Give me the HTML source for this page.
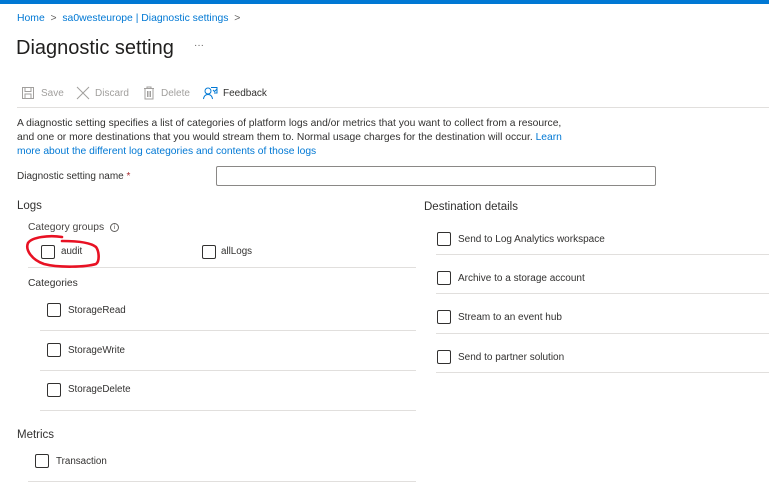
<!DOCTYPE html>
<html><head><meta charset="utf-8"><style>
*{margin:0;padding:0;box-sizing:border-box}
body{width:769px;height:486px;overflow:hidden;background:#fff;font-family:"Liberation Sans",sans-serif;color:#323130;position:relative;font-size:9.8px}
.a{position:absolute;white-space:nowrap;line-height:1}
.cb{position:absolute;width:14px;height:14px;border:1px solid #323130;border-radius:2px}
.ln{position:absolute;height:1px;background:#e1dfdd}
.blue{color:#0078d4}
.h{font-size:11px;color:#323130}
</style></head><body>
<div style="position:absolute;left:0;top:0;width:769px;height:4px;background:#0078d4"></div>
<div class="a blue" style="left:17px;top:14px;font-size:10.4px">Home <span style="color:#605e5c">&nbsp;&gt;&nbsp;</span> sa0westeurope | Diagnostic settings <span style="color:#605e5c">&nbsp;&gt;</span></div>
<div class="a" style="left:16px;top:38px;font-size:20px;color:#201f1e">Diagnostic setting</div>
<div class="a" style="left:194px;top:41px;font-size:10px;color:#605e5c">···</div>

<svg style="position:absolute;left:21px;top:86px" width="14" height="14" viewBox="0 0 14 14" fill="none" stroke="#a19f9d" stroke-width="1"><rect x="1.5" y="1.5" width="11" height="11"/><rect x="4" y="1.5" width="6" height="4"/><rect x="4" y="8" width="6" height="4.5"/></svg>
<div class="a" style="left:41px;top:89px;font-size:10px;color:#a19f9d">Save</div>
<svg style="position:absolute;left:76px;top:86px" width="14" height="14" viewBox="0 0 14 14" stroke="#a19f9d" stroke-width="1"><path d="M1 1L13 13M13 1L1 13"/></svg>
<div class="a" style="left:95px;top:89px;font-size:10px;color:#a19f9d">Discard</div>
<svg style="position:absolute;left:143px;top:86px" width="12" height="14" viewBox="0 0 12 14" fill="none" stroke="#a19f9d" stroke-width="1"><path d="M1 2.5H11M4 2.5V1H8V2.5M2 2.5V13H10V2.5M4.5 5V11M6 5V11M7.5 5V11"/></svg>
<div class="a" style="left:161px;top:89px;font-size:10px;color:#a19f9d">Delete</div>
<svg style="position:absolute;left:203px;top:86px" width="15" height="14" viewBox="0 0 15 14" fill="none" stroke="#0078d4" stroke-width="1"><circle cx="5" cy="5" r="3"/><path d="M0.5 13C1 9.5 3 8.5 5 8.5S9 9.5 9.5 13M8 1.5H14V7H11M10 4L11.5 5.5L14 3"/></svg>
<div class="a" style="left:223px;top:89px;font-size:10px;color:#323130">Feedback</div>
<div class="ln" style="left:17px;top:107px;width:752px"></div>

<div class="a" style="left:17px;top:119px;font-size:10.3px">A diagnostic setting specifies a list of categories of platform logs and/or metrics that you want to collect from a resource,</div>
<div class="a" style="left:17px;top:133px;font-size:10.3px">and one or more destinations that you would stream them to. Normal usage charges for the destination will occur. <span class="blue">Learn</span></div>
<div class="a blue" style="left:17px;top:147px;font-size:10.3px">more about the different log categories and contents of those logs</div>

<div class="a" style="left:17px;top:172px;font-size:10px">Diagnostic setting name <span style="color:#a4262c">*</span></div>
<div style="position:absolute;left:216px;top:166px;width:440px;height:20px;border:1px solid #8a8886;border-radius:2px"></div>

<div class="a h" style="left:17px;top:201px;font-size:11.5px">Logs</div>
<div class="a" style="left:28px;top:223px;font-size:10.3px;color:#484644">Category groups <span style="display:inline-block;width:9px;height:9px;border:1px solid #605e5c;border-radius:50%;font-size:6px;text-align:center;line-height:8px;vertical-align:middle;margin-left:3px">i</span></div>
<div class="cb" style="left:41px;top:245px"></div><div class="a" style="left:61px;top:247px">audit</div>
<div class="cb" style="left:202px;top:245px"></div><div class="a" style="left:221px;top:247px">allLogs</div>
<div class="ln" style="left:28px;top:267px;width:388px"></div>
<svg style="position:absolute;left:24px;top:233px" width="80" height="40" viewBox="0 0 80 40" fill="none" stroke="#e81123" stroke-width="2.6" stroke-linecap="round"><path d="M38 4C25 2 8 4 4 10C1 17 8 27 20 31C35 35 62 34 72 31C76 28 75 18 72 14C66 9 52 8 38 8"/></svg>

<div class="a" style="left:28px;top:279px;font-size:10.3px">Categories</div>
<div class="cb" style="left:47px;top:303px"></div><div class="a" style="left:68px;top:306px">StorageRead</div>
<div class="ln" style="left:40px;top:330px;width:376px"></div>
<div class="cb" style="left:47px;top:343px"></div><div class="a" style="left:68px;top:346px">StorageWrite</div>
<div class="ln" style="left:40px;top:370px;width:376px"></div>
<div class="cb" style="left:47px;top:383px"></div><div class="a" style="left:68px;top:385px">StorageDelete</div>
<div class="ln" style="left:40px;top:410px;width:376px"></div>

<div class="a h" style="left:17px;top:430px;font-size:11.5px">Metrics</div>
<div class="cb" style="left:35px;top:454px"></div><div class="a" style="left:56px;top:457px">Transaction</div>
<div class="ln" style="left:28px;top:481px;width:388px"></div>

<div class="a h" style="left:424px;top:202px;font-size:11.5px">Destination details</div>
<div class="cb" style="left:437px;top:232px"></div><div class="a" style="left:458px;top:235px;font-size:10px">Send to Log Analytics workspace</div>
<div class="ln" style="left:436px;top:254px;width:333px"></div>
<div class="cb" style="left:437px;top:271px"></div><div class="a" style="left:458px;top:274px;font-size:10px">Archive to a storage account</div>
<div class="ln" style="left:436px;top:293px;width:333px"></div>
<div class="cb" style="left:437px;top:310px"></div><div class="a" style="left:458px;top:313px;font-size:10px">Stream to an event hub</div>
<div class="ln" style="left:436px;top:333px;width:333px"></div>
<div class="cb" style="left:437px;top:350px"></div><div class="a" style="left:458px;top:353px;font-size:10px">Send to partner solution</div>
<div class="ln" style="left:436px;top:372px;width:333px"></div>
</body></html>
